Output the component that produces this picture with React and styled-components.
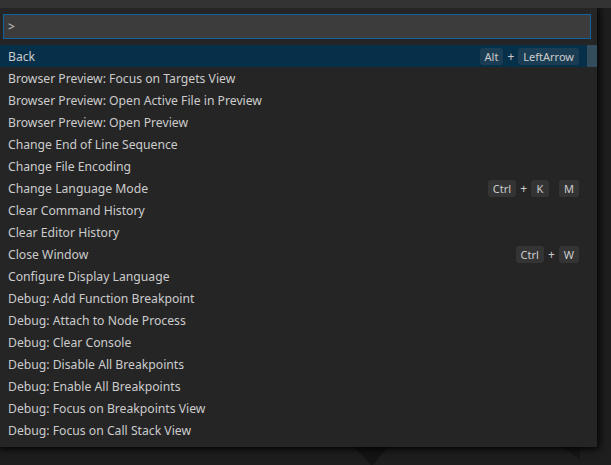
import styled, { createGlobalStyle } from "styled-components";

const GlobalStyle = createGlobalStyle`
  html, body {
    margin: 0;
    padding: 0;
    background: #1e1e1e;
    overflow: hidden;
  }
  #root {
    height: 465px;
  }
`;

const Page = styled.div`
  width: 611px;
  height: 465px;
  display: flex;
  flex-direction: column;
  font-family: "Noto Sans", "Open Sans", sans-serif;
`;

const TitleStrip = styled.div`
  height: 8px;
  background: #333333;
  flex-shrink: 0;
`;

const Editor = styled.div`
  position: relative;
  flex: 1;
  background: #1e1e1e;
  overflow: hidden;
`;

const Watermark = styled.svg`
  position: absolute;
  left: 250px;
  top: 430px;
`;

const QuickOpen = styled.div`
  position: absolute;
  left: 0;
  top: 0;
  width: 597px;
  background: #252526;
  box-shadow: 0 0 8px 2px #000000;
  padding: 6px 0 6px;
  box-sizing: border-box;
`;

const InputBox = styled.div`
  margin: 0 6px 0 3px;
  height: 25px;
  box-sizing: border-box;
  border: 1px solid #0e639c;
  background: #3c3c3c;
  color: #cccccc;
  font-size: 12px;
  display: flex;
  align-items: center;
  padding-left: 4px;
`;

const List = styled.div`
  position: relative;
  margin-top: 6px;
`;

const Row = styled.div`
  height: 22px;
  display: flex;
  align-items: center;
  padding: 0 18px 0 8px;
  font-size: 12.2px;
  color: #cccccc;
  background: ${(p) => (p.$active ? "#062f4a" : "transparent")};
`;

const Label = styled.span`
  flex: 1;
  white-space: nowrap;
`;

const Keys = styled.div`
  display: flex;
  align-items: center;
  gap: 10px;
  font-size: 11px;
`;

const Chord = styled.div`
  display: flex;
  align-items: center;
  gap: 4px;
`;

const Key = styled.span`
  background: rgba(128, 128, 128, 0.17);
  border-radius: 3px;
  padding: 0 5px;
  min-width: 8px;
  text-align: center;
  height: 17px;
  line-height: 17px;
  color: #cccccc;
`;

const Plus = styled.span`
  color: #cccccc;
  font-size: 12px;
`;

const Scrollbar = styled.div`
  position: absolute;
  right: 0;
  top: 0;
  width: 10px;
  height: 22px;
  background: rgba(121, 121, 121, 0.4);
`;

const commands = [
  { label: "Back", keys: [["Alt", "LeftArrow"]] },
  { label: "Browser Preview: Focus on Targets View" },
  { label: "Browser Preview: Open Active File in Preview" },
  { label: "Browser Preview: Open Preview" },
  { label: "Change End of Line Sequence" },
  { label: "Change File Encoding" },
  { label: "Change Language Mode", keys: [["Ctrl", "K"], ["M"]] },
  { label: "Clear Command History" },
  { label: "Clear Editor History" },
  { label: "Close Window", keys: [["Ctrl", "W"]] },
  { label: "Configure Display Language" },
  { label: "Debug: Add Function Breakpoint" },
  { label: "Debug: Attach to Node Process" },
  { label: "Debug: Clear Console" },
  { label: "Debug: Disable All Breakpoints" },
  { label: "Debug: Enable All Breakpoints" },
  { label: "Debug: Focus on Breakpoints View" },
  { label: "Debug: Focus on Call Stack View" },
];

function Keybinding({ chords }) {
  return (
    <Keys>
      {chords.map((chord, i) => (
        <Chord key={i}>
          {chord.map((k, j) => (
            <Chord key={j}>
              {j > 0 && <Plus>+</Plus>}
              <Key>{k}</Key>
            </Chord>
          ))}
        </Chord>
      ))}
    </Keys>
  );
}

export default function App() {
  return (
    <Page>
      <GlobalStyle />
      <TitleStrip />
      <Editor>
        <Watermark width="330" height="30" viewBox="0 0 330 30">
          <polygon points="95,0 145,0 122,28" fill="#141414" />
          <polygon points="300,0 330,0 330,22" fill="#171717" />
        </Watermark>
        <QuickOpen>
          <InputBox>&gt;</InputBox>
          <List>
            {commands.map((c, i) => (
              <Row key={c.label} $active={i === 0}>
                <Label>{c.label}</Label>
                {c.keys && <Keybinding chords={c.keys} />}
              </Row>
            ))}
            <Scrollbar />
          </List>
        </QuickOpen>
      </Editor>
    </Page>
  );
}
